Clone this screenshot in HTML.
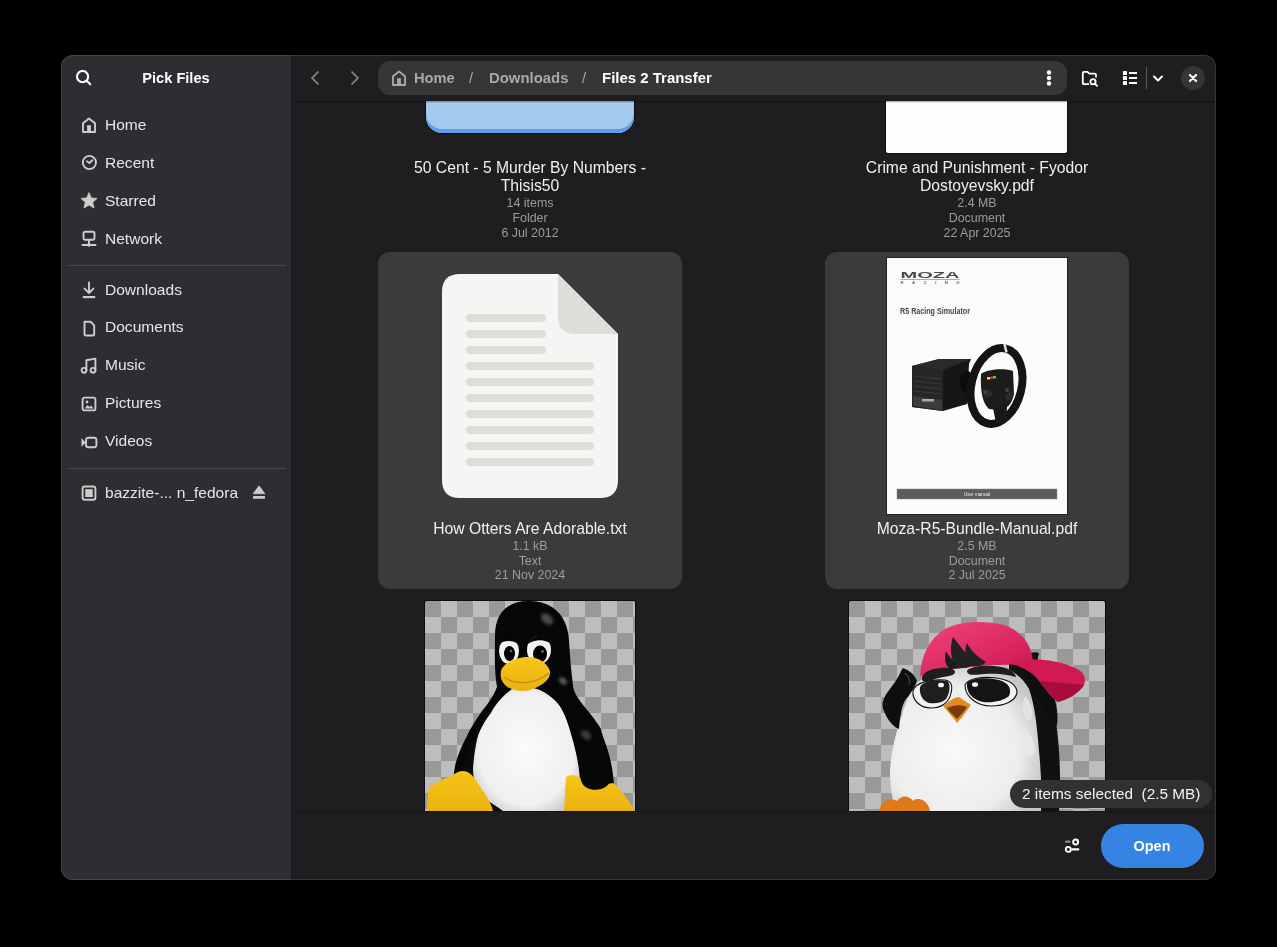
<!DOCTYPE html>
<html><head><meta charset="utf-8">
<style>
*{box-sizing:border-box;margin:0;padding:0}
html,body{width:1277px;height:947px;background:#000;overflow:hidden;font-family:"Liberation Sans",sans-serif}
.a{position:absolute}
#win{position:absolute;left:61px;top:55px;width:1155px;height:825px;border-radius:12px;overflow:hidden;background:#1d1d20}
#winb{position:absolute;left:61px;top:55px;width:1155px;height:825px;border-radius:12px;box-shadow:inset 0 0 0 1px rgba(255,255,255,0.11);pointer-events:none}
.t{position:absolute;white-space:nowrap;line-height:20px;color:#fff;will-change:transform}
</style></head><body>
<div id="win">
<div class="a" style="left:231px;top:0px;width:924px;height:825px;background:#1e1e20"></div>
<div class="a" style="left:317px;top:197px;width:304px;height:337px;background:#3b3b3d;border-radius:12px"></div>
<div class="a" style="left:764px;top:197px;width:304px;height:337px;background:#3b3b3d;border-radius:12px"></div>
<div class="a" style="left:365px;top:-15px;width:208px;height:93px;background:#a4c9ef;border-radius:0 0 16px 16px;box-shadow:0 0 0 1px rgba(0,0,0,0.55),inset 0 -4px 0 #5e9ee8"></div>
<div class="a" style="left:825px;top:-15px;width:181px;height:113px;background:#fdfdfc;border-radius:0 0 2px 2px;box-shadow:0 0 0 1px rgba(0,0,0,0.5)"></div>
<div class="t" style="left:319.00px;width:300px;text-align:center;top:103.16px;font-size:15.7px;color:#f0f0f0;font-weight:normal;">50 Cent - 5 Murder By Numbers -</div>
<div class="t" style="left:319.00px;width:300px;text-align:center;top:121.06px;font-size:15.7px;color:#f0f0f0;font-weight:normal;">Thisis50</div>
<div class="t" style="left:319.00px;width:300px;text-align:center;top:137.70px;font-size:12.4px;color:#9c9c9e;font-weight:normal;">14 items</div>
<div class="t" style="left:319.00px;width:300px;text-align:center;top:152.70px;font-size:12.4px;color:#9c9c9e;font-weight:normal;">Folder</div>
<div class="t" style="left:319.00px;width:300px;text-align:center;top:167.80px;font-size:12.4px;color:#9c9c9e;font-weight:normal;">6 Jul 2012</div>
<div class="t" style="left:766.00px;width:300px;text-align:center;top:103.36px;font-size:15.7px;color:#f0f0f0;font-weight:normal;">Crime and Punishment - Fyodor</div>
<div class="t" style="left:766.00px;width:300px;text-align:center;top:121.06px;font-size:15.7px;color:#f0f0f0;font-weight:normal;">Dostoyevsky.pdf</div>
<div class="t" style="left:766.00px;width:300px;text-align:center;top:137.70px;font-size:12.4px;color:#9c9c9e;font-weight:normal;">2.4 MB</div>
<div class="t" style="left:766.00px;width:300px;text-align:center;top:152.70px;font-size:12.4px;color:#9c9c9e;font-weight:normal;">Document</div>
<div class="t" style="left:766.00px;width:300px;text-align:center;top:167.80px;font-size:12.4px;color:#9c9c9e;font-weight:normal;">22 Apr 2025</div>
<svg class="a" style="left:381px;top:219px;" width="176" height="224" viewBox="0 0 176 224"><path d="M18 0 H116 L176 60 V206 Q176 224 158 224 H18 Q0 224 0 206 V18 Q0 0 18 0 Z" fill="#f6f5f4"/><path d="M116 0 L176 60 H134 Q116 60 116 42 Z" fill="#deddda"/><rect x="24" y="40" width="80" height="8" rx="4" fill="#deddda"/><rect x="24" y="56" width="80" height="8" rx="4" fill="#deddda"/><rect x="24" y="72" width="80" height="8" rx="4" fill="#deddda"/><rect x="24" y="88" width="128" height="8" rx="4" fill="#deddda"/><rect x="24" y="104" width="128" height="8" rx="4" fill="#deddda"/><rect x="24" y="120" width="128" height="8" rx="4" fill="#deddda"/><rect x="24" y="136" width="128" height="8" rx="4" fill="#deddda"/><rect x="24" y="152" width="128" height="8" rx="4" fill="#deddda"/><rect x="24" y="168" width="128" height="8" rx="4" fill="#deddda"/><rect x="24" y="184" width="128" height="8" rx="4" fill="#deddda"/></svg>
<svg class="a" style="left:826px;top:203px;box-shadow:0 0 0 1px rgba(0,0,0,0.45);will-change:transform" width="180" height="256" viewBox="0 0 180 256"><rect x="0" y="0" width="180" height="256" fill="#fbfbfa"/><text x="13.6" y="19.8" font-family="Liberation Sans" font-weight="bold" font-size="9.3" fill="#4a4a4a" textLength="59" lengthAdjust="spacingAndGlyphs">MOZA</text><rect x="13.6" y="21" width="59" height="0.7" fill="#888"/><text x="13.6" y="25.8" font-family="Liberation Sans" font-weight="bold" font-size="4.2" fill="#666" textLength="59" lengthAdjust="spacing">RACING</text><text x="13" y="56" font-family="Liberation Sans" font-weight="bold" font-size="8.3" fill="#444" textLength="70" lengthAdjust="spacingAndGlyphs">R5 Racing Simulator</text><path d="M25 108 L52 101 L84 101 L82 106 L80 146 L56 153 L25 149 Z" fill="#161616"/><path d="M25 108 L56 112 L56 153 L25 149 Z" fill="#262626"/><path d="M27 118 L54 121 M27 123 L54 126 M27 128 L54 131 M27 133 L54 136" stroke="#3a3a3a" stroke-width="1.2"/><path d="M26 138 L55 142 L55 152 L26 148 Z" fill="#3c3c3c"/><rect x="35" y="141" width="12" height="2.5" fill="#aaa"/><path d="M25 108 L52 101 L84 101 L56 112 Z" fill="#2a2a2a"/><ellipse cx="80" cy="124" rx="7" ry="11" fill="#0c0c0c"/><g transform="rotate(14 109.5 128)"><ellipse cx="109.5" cy="128" rx="25" ry="38.5" fill="none" stroke="#141414" stroke-width="8"/></g><path d="M94 116 C100 111 118 110 126 113 L127 136 C125 146 120 151 112 152 L102 151 C96 146 93 134 94 116 Z" fill="#1c1c1c"/><path d="M106 150 L120 149 L119 164 L109 165 Z" fill="#181818"/><path d="M96 132 L103 131 L106 138 L98 140 Z M118 138 L125 132 L126 140 L120 143 Z" fill="#2c2c2c"/><path d="M117.5 86 L119.5 94.5" stroke="#e0e0e0" stroke-width="2.5"/><rect x="100" y="119" width="3" height="2.5" fill="#dd3"/><rect x="103" y="118.5" width="3" height="2.5" fill="#d33"/><rect x="106" y="118" width="3" height="2.5" fill="#4c4"/><circle cx="98" cy="134" r="2" fill="#444"/><circle cx="120" cy="132" r="2" fill="#444"/><rect x="10" y="231" width="160" height="10" fill="#5c5c5c" stroke="#888" stroke-width="0.5"/><text x="90" y="238.3" text-anchor="middle" font-family="Liberation Sans" font-size="4.6" fill="#eee">User manual</text></svg>
<div class="t" style="left:319.00px;width:300px;text-align:center;top:463.76px;font-size:15.7px;color:#f0f0f0;font-weight:normal;">How Otters Are Adorable.txt</div>
<div class="t" style="left:319.00px;width:300px;text-align:center;top:480.70px;font-size:12.4px;color:#9c9c9e;font-weight:normal;">1.1 kB</div>
<div class="t" style="left:319.00px;width:300px;text-align:center;top:495.50px;font-size:12.4px;color:#9c9c9e;font-weight:normal;">Text</div>
<div class="t" style="left:319.00px;width:300px;text-align:center;top:510.30px;font-size:12.4px;color:#9c9c9e;font-weight:normal;">21 Nov 2024</div>
<div class="t" style="left:766.00px;width:300px;text-align:center;top:463.96px;font-size:15.7px;color:#f0f0f0;font-weight:normal;">Moza-R5-Bundle-Manual.pdf</div>
<div class="t" style="left:766.00px;width:300px;text-align:center;top:480.50px;font-size:12.4px;color:#9c9c9e;font-weight:normal;">2.5 MB</div>
<div class="t" style="left:766.00px;width:300px;text-align:center;top:495.50px;font-size:12.4px;color:#9c9c9e;font-weight:normal;">Document</div>
<div class="t" style="left:766.00px;width:300px;text-align:center;top:510.20px;font-size:12.4px;color:#9c9c9e;font-weight:normal;">2 Jul 2025</div>
<div class="a" style="left:364px;top:546px;width:210px;height:256px;background:repeating-conic-gradient(#bdbdbd 0 25%,#999 0 50%) 0 0/32px 32px;border-radius:2px;box-shadow:0 0 0 1px rgba(0,0,0,0.6);overflow:hidden"><svg width="210" height="256" viewBox="0 0 210 256" style="position:absolute;left:0;top:0"><defs><radialGradient id="bel" cx="0.5" cy="0.5" r="0.6"><stop offset="0" stop-color="#fbfbfb"/><stop offset="0.75" stop-color="#f0f0f0"/><stop offset="1" stop-color="#c8c8c8"/></radialGradient><linearGradient id="yel" x1="0" y1="0" x2="0" y2="1"><stop offset="0" stop-color="#f6c519"/><stop offset="1" stop-color="#eab20e"/></linearGradient><filter id="blr" x="-50%" y="-50%" width="200%" height="200%"><feGaussianBlur stdDeviation="1.6"/></filter></defs><path d="M104 0 C82 0 70 12 70 35 C70 50 69 70 72 86 C68 96 62 104 57 110 C50 120 45 128 42 135 C36 146 32 156 30 165 C28 175 28 185 30 195 L40 210 L200 210 C196 200 192 192 189 184 C188 170 186 160 183 150 C180 140 177 134 176 128 C170 118 163 110 158 104 C152 96 148 90 148 84 C146 70 145 55 144 40 C143 15 128 0 104 0 Z" fill="#060606"/><ellipse cx="122" cy="18" rx="7" ry="4.5" fill="#4a4a4a" transform="rotate(40 122 18)" filter="url(#blr)"/><ellipse cx="138" cy="80" rx="4.5" ry="3" fill="#5a5a5a" transform="rotate(40 138 80)" filter="url(#blr)"/><ellipse cx="161" cy="134" rx="6" ry="4" fill="#3a3a3a" transform="rotate(40 161 134)" filter="url(#blr)"/><path d="M90 86 C78 94 70 104 66 112 C58 122 52 134 50 146 C48 158 47 168 49 178 C52 190 62 202 76 210 L150 210 C154 200 155 190 155 180 C154 165 152 155 148 140 C144 125 140 112 134 104 C126 94 114 86 100 86 Z" fill="url(#bel)"/><ellipse cx="84" cy="50" rx="10" ry="13" fill="#f2f2f2"/><ellipse cx="114" cy="49" rx="12" ry="14" fill="#f2f2f2"/><path d="M73 44 C76 34 90 34 93 43 C88 39 78 39 73 44 Z" fill="#060606"/><path d="M103 43 C107 32 122 32 126 43 C120 38 110 38 103 43 Z" fill="#060606"/><ellipse cx="84.5" cy="52.5" rx="5.5" ry="7.5" fill="#000"/><ellipse cx="115" cy="53" rx="7" ry="8.5" fill="#000"/><circle cx="86" cy="50" r="1.2" fill="#666"/><circle cx="117.5" cy="50.5" r="1.4" fill="#666"/><path d="M76 70 C78 62 92 56 102 56 C114 56 122 62 125 70 C126 78 118 84 108 88 C98 92 86 90 80 84 C76 80 75 75 76 70 Z" fill="url(#yel)"/><path d="M79 76 C90 84 110 84 124 72" fill="none" stroke="#c98c08" stroke-width="1.3"/><path d="M55 125 C48 140 40 160 36 175 C34 182 40 186 50 192 C60 198 70 204 78 210 L60 210 C54 200 50 190 48 180 C47 165 50 145 55 125 Z" fill="#0b0b0b"/><path d="M4 186 C10 182 24 176 33 171 C40 168 46 172 50 178 C54 184 58 190 62 196 C65 201 67 206 68 210 L2 210 C2 200 3 192 4 186 Z" fill="url(#yel)"/><path d="M141 176 C146 173 152 174 158 178 C166 184 176 184 188 182 C196 188 202 198 208 206 L210 210 L139 210 C140 198 140 186 141 176 Z" fill="url(#yel)"/><path d="M156 172 C162 166 176 166 184 172 C188 178 184 186 176 188 C168 190 160 188 157 182 C155 178 155 175 156 172 Z" fill="#080808"/></svg></div>
<div class="a" style="left:788px;top:546px;width:256px;height:256px;background:repeating-conic-gradient(#bdbdbd 0 25%,#999 0 50%) 0 0/32px 32px;border-radius:2px;box-shadow:0 0 0 1px rgba(0,0,0,0.6);overflow:hidden"><svg width="256" height="256" viewBox="0 0 256 256" style="position:absolute;left:0;top:0"><defs><radialGradient id="pb" cx="0.42" cy="0.6" r="0.62"><stop offset="0" stop-color="#f9f9f9"/><stop offset="0.7" stop-color="#ededed"/><stop offset="1" stop-color="#c6c6c6"/></radialGradient><linearGradient id="hat" x1="0" y1="0" x2="1" y2="1"><stop offset="0" stop-color="#f0457a"/><stop offset="1" stop-color="#cc1550"/></linearGradient></defs><path d="M170 62 C190 72 203 92 207 120 C211 150 212 180 210 210 L160 210 L160 62 Z" fill="#111"/><path d="M120 60 C90 60 66 78 58 100 C48 125 42 150 41 170 C41 190 44 200 47 210 L192 210 C193 190 192 170 190 150 C188 125 186 105 180 88 C170 70 150 60 120 60 Z" fill="url(#pb)"/><path d="M54 67 C60 69 66 74 68 80 C66 86 62 92 57 98 C53 104 51 114 50 128 C44 126 38 118 35 110 C32 104 34 98 38 92 C44 84 50 76 52 70 Z" fill="#0e0e0e"/><path d="M56 72 C60 76 62 80 60 84" fill="none" stroke="#3a3a3a" stroke-width="1.5"/><path d="M172 62 C178 52 184 50 190 52 C186 62 192 75 200 84 C206 95 210 110 208 125 C202 120 196 108 190 100 C184 90 178 76 172 62 Z" fill="#0e0e0e"/><path d="M71 75 C72 55 80 38 96 28 C110 20 135 19 155 24 C172 30 182 42 184 60 L184 64 C150 62 105 66 71 75 Z" fill="url(#hat)"/><path d="M160 62 C180 56 205 58 224 66 C234 70 238 76 235 84 C230 92 220 98 209 101 C202 96 196 88 190 80 C184 72 174 66 160 62 Z" fill="#d11a52"/><path d="M190 80 C200 92 206 98 209 101 C220 98 230 92 235 84" fill="#a80c3a"/><path d="M97 50 C100 56 106 62 114 67 L101 68 C96 64 95 57 97 50 Z" fill="#1c1c1c"/><path d="M104 36 C110 44 118 54 126 62 C122 67 114 68 108 66 C102 60 100 48 104 36 Z" fill="#222"/><path d="M118 42 C122 50 130 57 137 61 C134 65 128 66 122 65 C116 60 115 50 118 42 Z" fill="#222"/><path d="M73 79 C72 72 80 68 92 67 C100 66 106 68 106 71 C106 75 98 75 90 77 C82 79 75 82 73 79 Z" fill="#1e1e1e"/><path d="M118 70 C120 66 132 64 145 65 C158 66 166 70 167 76 C160 74 148 72 136 73 C126 74 118 75 118 70 Z" fill="#1e1e1e"/><path d="M64 90 C66 82 80 78 96 79 C102 80 104 84 102 92 C100 102 92 107 82 107 C72 107 63 100 64 90 Z" fill="#f2f2f2" stroke="#111" stroke-width="1.1"/><path d="M71 86 C74 80 86 78 98 80 C102 82 101 92 97 98 C93 102 86 103 80 102 C74 100 70 94 71 86 Z" fill="#1e1e1e"/><ellipse cx="92" cy="84" rx="3" ry="2.3" fill="#fff"/><path d="M116 84 C118 78 132 75 148 77 C160 79 168 84 168 92 C166 100 156 105 142 105 C128 105 116 96 116 84 Z" fill="#f2f2f2" stroke="#111" stroke-width="1.1"/><path d="M118 82 C122 77 136 76 150 79 C160 82 163 88 160 95 C154 100 144 102 134 101 C124 99 117 92 118 82 Z" fill="#151515"/><ellipse cx="126" cy="83.5" rx="3" ry="2.3" fill="#fff"/><path d="M94 105 C100 100 106 96 110 96 C114 99 118 101 122 104 C118 110 112 118 108 122 C104 116 98 110 94 105 Z" fill="#e38c22"/><path d="M98 107 C104 104 112 103 118 106 C114 112 110 116 108 118 C104 114 100 110 98 107 Z" fill="#7a3c0c"/><path d="M176 95 C172 105 174 118 180 120 C186 116 184 104 176 95 Z" fill="#e4e4e4"/><path d="M175 125 C170 138 172 155 181 156 C190 152 186 138 175 125 Z" fill="#e8e8e8"/><path d="M30 210 C32 200 40 196 48 200 C52 194 60 194 64 200 C68 196 76 198 80 206 L81 210 Z" fill="#e07a18"/></svg></div>
<div class="a" style="left:231px;top:0px;width:924px;height:46px;background:#1e1e20"></div>
<div class="a" style="left:231px;top:46px;width:924px;height:1px;background:rgba(0,0,0,0.28)"></div>
<div class="a" style="left:231px;top:47px;width:924px;height:1px;background:rgba(0,0,0,0.10)"></div>
<div class="a" style="left:0px;top:0px;width:230px;height:825px;background:#2e2e32"></div>
<div class="a" style="left:230px;top:0px;width:1px;height:825px;background:#18181b"></div>
<svg class="a" style="left:15px;top:15px;" width="16" height="16" viewBox="0 0 16 16"><circle cx="6.6" cy="6.6" r="5.6" fill="none" stroke="#fff" stroke-width="2.1"/><path d="M10.8 10.8 L14.2 14.2" stroke="#fff" stroke-width="2.2" stroke-linecap="round"/></svg>
<div class="t" style="left:55.00px;width:120px;text-align:center;top:13.14px;font-size:14.6px;color:#fff;font-weight:bold;">Pick Files</div>
<div class="t" style="left:44.30px;top:59.51px;font-size:15.55px;color:#e6e6e6;font-weight:normal;">Home</div>
<div class="t" style="left:44.30px;top:97.81px;font-size:15.55px;color:#e6e6e6;font-weight:normal;">Recent</div>
<div class="t" style="left:44.30px;top:135.81px;font-size:15.55px;color:#e6e6e6;font-weight:normal;">Starred</div>
<div class="t" style="left:44.30px;top:173.61px;font-size:15.55px;color:#e6e6e6;font-weight:normal;">Network</div>
<div class="t" style="left:44.30px;top:224.61px;font-size:15.55px;color:#e6e6e6;font-weight:normal;">Downloads</div>
<div class="t" style="left:44.30px;top:262.41px;font-size:15.55px;color:#e6e6e6;font-weight:normal;">Documents</div>
<div class="t" style="left:44.30px;top:300.41px;font-size:15.55px;color:#e6e6e6;font-weight:normal;">Music</div>
<div class="t" style="left:44.30px;top:338.41px;font-size:15.55px;color:#e6e6e6;font-weight:normal;">Pictures</div>
<div class="t" style="left:44.30px;top:376.41px;font-size:15.55px;color:#e6e6e6;font-weight:normal;">Videos</div>
<div class="a" style="left:6px;top:210px;width:219px;height:1px;background:#48484c"></div>
<div class="a" style="left:6px;top:413px;width:219px;height:1px;background:#48484c"></div>
<div class="t" style="left:44.30px;top:427.81px;font-size:15.55px;color:#e6e6e6;font-weight:normal;">bazzite-... n_fedora</div>
<svg class="a" style="left:20px;top:62px;" width="16" height="16" viewBox="0 0 16 16"><path d="M2 15 V6.2 L8 1.4 L14 6.2 V15 Z" fill="none" stroke="#cdcdcd" stroke-width="1.9" stroke-linejoin="round" stroke-linecap="round"/><rect x="6.1" y="8.2" width="3.8" height="6.4" fill="#cdcdcd"/></svg>
<svg class="a" style="left:20px;top:99px;" width="17" height="17" viewBox="0 0 17 17"><circle cx="8.4" cy="8.5" r="6.6" fill="none" stroke="#cdcdcd" stroke-width="1.9" stroke-linejoin="round" stroke-linecap="round"/><path d="M5.9 7.3 L8.4 9 L11.3 6.2" fill="none" stroke="#cdcdcd" stroke-width="1.9" stroke-linejoin="round" stroke-linecap="round" stroke-width="1.25"/></svg>
<svg class="a" style="left:19px;top:137px;" width="18" height="17" viewBox="0 0 18 17"><path d="M9 0.6 L11.3 5.9 L17 6.4 L12.7 10.2 L14 16 L9 13 L4 16 L5.3 10.2 L1 6.4 L6.7 5.9 Z" fill="#cdcdcd" stroke="#cdcdcd" stroke-width="0.8" stroke-linejoin="round"/></svg>
<svg class="a" style="left:20px;top:175px;" width="16" height="18" viewBox="0 0 16 18"><rect x="2.5" y="1.8" width="11" height="8" rx="1.5" fill="none" stroke="#cdcdcd" stroke-width="1.9" stroke-linejoin="round" stroke-linecap="round"/><path d="M8 10 V14 M1.5 15 H14.5" fill="none" stroke="#cdcdcd" stroke-width="1.9" stroke-linejoin="round" stroke-linecap="round"/><circle cx="8" cy="15" r="1.8" fill="#cdcdcd"/></svg>
<svg class="a" style="left:20px;top:226px;" width="16" height="18" viewBox="0 0 16 18"><path d="M8 1.5 V12 M3.6 7.6 L8 12 L12.4 7.6" fill="none" stroke="#cdcdcd" stroke-width="1.9" stroke-linejoin="round" stroke-linecap="round"/><rect x="1.8" y="15" width="12.4" height="2.2" fill="#cdcdcd"/></svg>
<svg class="a" style="left:20px;top:265px;" width="16" height="17" viewBox="0 0 16 17"><path d="M3.5 1.7 H9.5 L13.2 5.4 V14.2 Q13.2 15.5 11.9 15.5 H4.8 Q3.5 15.5 3.5 14.2 Z" fill="none" stroke="#cdcdcd" stroke-width="1.9" stroke-linejoin="round" stroke-linecap="round"/></svg>
<svg class="a" style="left:19px;top:302px;" width="17" height="17" viewBox="0 0 17 17"><circle cx="4" cy="13.3" r="2.4" fill="none" stroke="#cdcdcd" stroke-width="1.9" stroke-linejoin="round" stroke-linecap="round"/><circle cx="13" cy="13.3" r="2.4" fill="none" stroke="#cdcdcd" stroke-width="1.9" stroke-linejoin="round" stroke-linecap="round"/><path d="M6.4 13 V3.2 L15.4 1.6 V13" fill="none" stroke="#cdcdcd" stroke-width="1.9" stroke-linejoin="round" stroke-linecap="round"/></svg>
<svg class="a" style="left:20px;top:341px;" width="16" height="16" viewBox="0 0 16 16"><rect x="1.6" y="1.6" width="12.8" height="12.8" rx="2" fill="none" stroke="#cdcdcd" stroke-width="1.9" stroke-linejoin="round" stroke-linecap="round"/><path d="M3.5 12.5 L6.5 9 L8.5 11 L10 9.5 L12.5 12.5 Z" fill="#cdcdcd"/><circle cx="6" cy="6" r="1.4" fill="#cdcdcd"/></svg>
<svg class="a" style="left:19px;top:381px;" width="18" height="13" viewBox="0 0 18 13"><path d="M1.5 2 L5.5 6.5 L1.5 11 Z" fill="#cdcdcd"/><rect x="6" y="1.8" width="10.4" height="9.4" rx="2.2" fill="none" stroke="#cdcdcd" stroke-width="1.9" stroke-linejoin="round" stroke-linecap="round"/></svg>
<svg class="a" style="left:20px;top:430px;" width="16" height="16" viewBox="0 0 16 16"><rect x="1.6" y="1.5" width="12.8" height="13.2" rx="2.3" fill="none" stroke="#cdcdcd" stroke-width="1.9" stroke-linejoin="round" stroke-linecap="round" stroke-width="2.1"/><rect x="4.2" y="4.2" width="7.6" height="7.8" fill="#cdcdcd"/><path d="M4.2 5.2 H3.6 M4.2 7.2 H3.6 M4.2 9.2 H3.6 M11.8 5.2 H12.4 M11.8 7.2 H12.4 M11.8 9.2 H12.4" stroke="#2e2e32" stroke-width="0.8"/></svg>
<svg class="a" style="left:191px;top:430px;" width="14" height="15" viewBox="0 0 14 15"><path d="M7 0.8 L13 8.8 H1 Z" fill="#cdcdcd" stroke="#cdcdcd" stroke-width="0.6" stroke-linejoin="round"/><rect x="1" y="11" width="12" height="2.8" rx="0.6" fill="#cdcdcd"/></svg>
<svg class="a" style="left:248px;top:15px;" width="12" height="16" viewBox="0 0 12 16"><path d="M9.5 1.5 L3 8 L9.5 14.5" fill="none" stroke="#7a7a7c" stroke-width="1.8"/></svg>
<svg class="a" style="left:288px;top:15px;" width="12" height="16" viewBox="0 0 12 16"><path d="M2.5 1.5 L9 8 L2.5 14.5" fill="none" stroke="#7a7a7c" stroke-width="1.8"/></svg>
<div class="a" style="left:317px;top:6px;width:689px;height:34px;background:#363638;border-radius:12px"></div>
<svg class="a" style="left:330px;top:15px;" width="16" height="16" viewBox="0 0 16 16"><path d="M2 15 V6.2 L8 1.4 L14 6.2 V15 Z" fill="none" stroke="#a8a8aa" stroke-width="1.9" stroke-linejoin="round"/><rect x="6.1" y="8.2" width="3.8" height="6.4" fill="#a8a8aa"/></svg>
<div class="t" style="left:352.50px;top:12.73px;font-size:14.64px;color:#a8a8aa;font-weight:bold;">Home</div>
<div class="t" style="left:408.00px;top:12.74px;font-size:14.6px;color:#a8a8aa;font-weight:normal;">/</div>
<div class="t" style="left:427.50px;top:12.64px;font-size:14.9px;color:#a8a8aa;font-weight:bold;">Downloads</div>
<div class="t" style="left:521.00px;top:12.74px;font-size:14.6px;color:#a8a8aa;font-weight:normal;">/</div>
<div class="t" style="left:540.50px;top:12.61px;font-size:14.97px;color:#ffffff;font-weight:bold;">Files 2 Transfer</div>
<svg class="a" style="left:985px;top:14px;" width="6" height="18" viewBox="0 0 6 18"><circle cx="3" cy="3.5" r="2.2" fill="#fff"/><circle cx="3" cy="9" r="2.2" fill="#fff"/><circle cx="3" cy="14.5" r="2.2" fill="#fff"/></svg>
<svg class="a" style="left:1020px;top:15px;" width="18" height="17" viewBox="0 0 18 17"><path d="M8 14.2 H3.2 Q1.8 14.2 1.8 12.8 V3 Q1.8 1.8 3 1.8 H6.5 L8.3 3.6 H13.5 Q15 3.6 15 5 V7.5" fill="none" stroke="#fff" stroke-width="1.8" stroke-linejoin="round"/><circle cx="12" cy="11.8" r="2.6" fill="none" stroke="#fff" stroke-width="1.8"/><path d="M13.8 13.6 L16 15.8" stroke="#fff" stroke-width="1.9" stroke-linecap="round"/></svg>
<svg class="a" style="left:1061px;top:15px;" width="16" height="16" viewBox="0 0 16 16"><rect x="0.9" y="1.0" width="4.1" height="4.1" rx="0.7" fill="#fff"/><rect x="0.9" y="6.0" width="4.1" height="4.1" rx="0.7" fill="#fff"/><rect x="0.9" y="11.0" width="4.1" height="4.1" rx="0.7" fill="#fff"/><rect x="7" y="2" width="8" height="2" fill="#fff"/><rect x="7" y="7" width="8" height="2" fill="#fff"/><rect x="7" y="12" width="8" height="2" fill="#fff"/></svg>
<div class="a" style="left:1085px;top:12px;width:1px;height:22px;background:#5a5a5c"></div>
<svg class="a" style="left:1090px;top:18px;" width="14" height="12" viewBox="0 0 14 12"><path d="M3 3.5 L7 7.5 L11 3.5" fill="none" stroke="#fff" stroke-width="1.9" stroke-linecap="round" stroke-linejoin="round"/></svg>
<div class="a" style="left:1120px;top:11px;width:24px;height:24px;background:#353537;border-radius:50%"></div>
<svg class="a" style="left:1126px;top:17px;" width="12" height="12" viewBox="0 0 12 12"><path d="M2.9 2.9 L9.1 9.1 M9.1 2.9 L2.9 9.1" stroke="#fff" stroke-width="2.1" stroke-linecap="round"/></svg>
<div class="a" style="left:231px;top:756px;width:924px;height:69px;background:#1e1e20"></div>
<div class="a" style="left:231px;top:756px;width:924px;height:1px;background:#151517"></div>
<svg class="a" style="left:1003px;top:783px;" width="16" height="16" viewBox="0 0 16 16"><rect x="1.2" y="2.6" width="5.2" height="2.2" rx="0.6" fill="#8c8c8e"/><circle cx="11.6" cy="4" r="2.5" fill="none" stroke="#fff" stroke-width="1.9"/><circle cx="4.3" cy="11.4" r="2.5" fill="none" stroke="#fff" stroke-width="1.9"/><rect x="7.3" y="10.3" width="7.9" height="2.3" rx="0.6" fill="#fff"/></svg>
<div class="a" style="left:1040px;top:769px;width:103px;height:44px;background:#3584e4;border-radius:22px"></div>
<div class="t" style="left:1051.00px;width:80px;text-align:center;top:780.99px;font-size:14.45px;color:#fff;font-weight:bold;">Open</div>
<div class="a" style="left:949px;top:725px;width:202px;height:28px;background:#313134;border-radius:14px"></div>
<div class="t" style="left:960.50px;top:728.88px;font-size:15.36px;color:#f2f2f2;font-weight:normal;">2 items selected&nbsp;&nbsp;(2.5 MB)</div></div>
<div id="winb"></div>
</body></html>
